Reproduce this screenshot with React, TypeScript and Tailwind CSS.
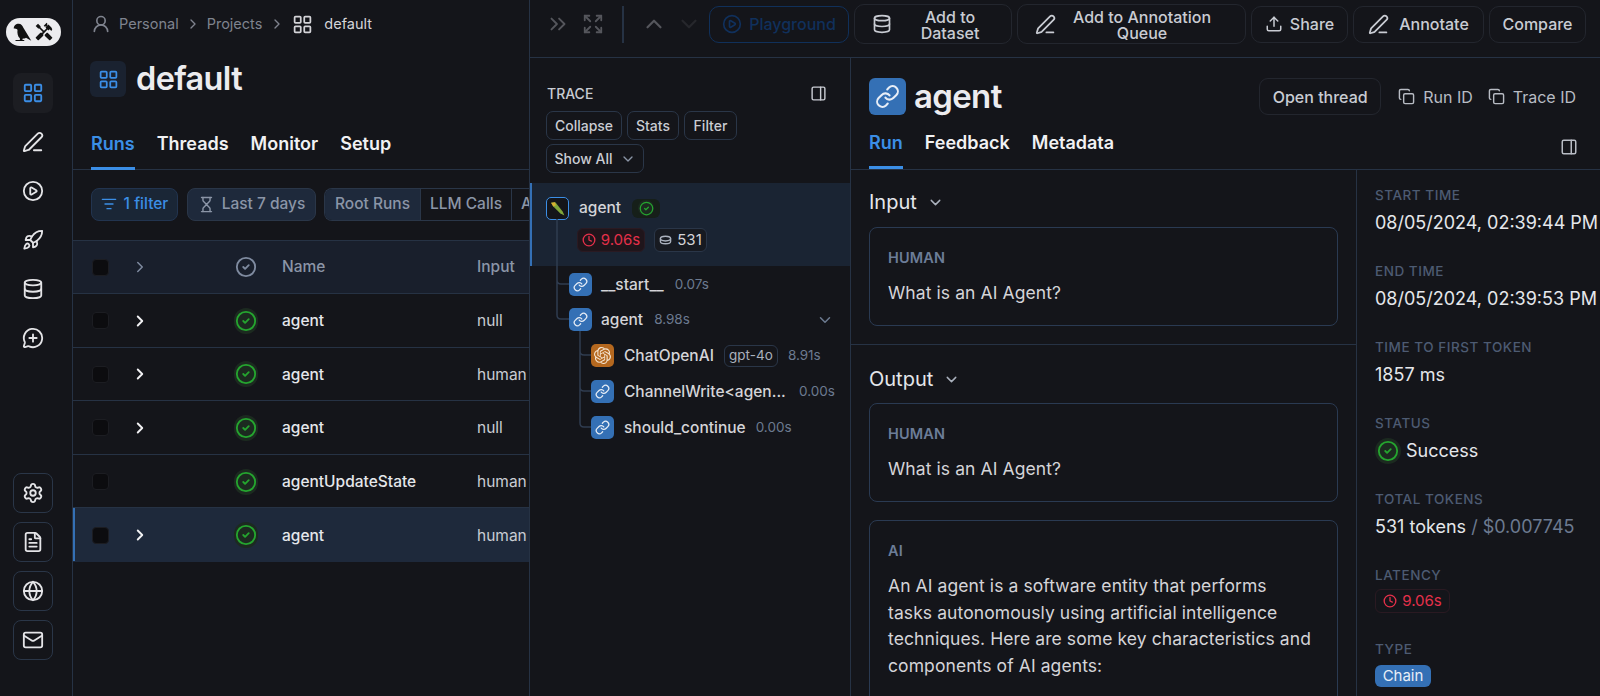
import {
  ChevronDown, ChevronRight, ChevronUp, ChevronsRight, CircleCheck, CirclePlay, Clock, Copy, Database, Expand,
  FileText, Globe, Hourglass, LayoutGrid, Link, ListFilter, Mail, MessageCirclePlus, PanelRight, PenLine,
  Rocket, Settings, Upload, UserRound,
} from 'lucide-react'
import { MdHandyman } from 'react-icons/md'
import { SiOpenai } from 'react-icons/si'

const rows = [
  { name: 'agent', input: 'null', expand: true },
  { name: 'agent', input: 'human', expand: true },
  { name: 'agent', input: 'null', expand: true },
  { name: 'agentUpdateState', input: 'human', expand: false },
  { name: 'agent', input: 'human', expand: true, selected: true },
]

function Parrot({ className }: { className: string }) {
  return (
    <svg viewBox="0 0 24 24" className={className} fill="currentColor">
      <path d="M2 7.500C2 4 4.500 2 7.500 2C10.500 2 12 4 13 6.500L22 21.500L16 18C15 18.800 13.500 19 12 19L12 20.500L14 20.500L14 21.800L4 21.800L4 20.500L9 20.500L9 18.500C6.500 16.500 5.800 12.500 6.300 8.800C5 7.800 3.500 7.500 2 7.500Z" />
    </svg>
  )
}

function StatusIcon({ size = 'md' }: { size?: 'sm' | 'md' }) {
  return (
    <span className={`flex items-center justify-center rounded-full bg-[#1c2a20] ${size === 'md' ? 'h-[26px] w-[26px]' : 'h-[16px] w-[16px]'}`}>
      <CircleCheck className={`text-[#25a52f] ${size === 'md' ? 'h-[22px] w-[22px]' : 'h-[15px] w-[15px]'}`} strokeWidth={2} />
    </span>
  )
}

function NodeIcon({ small = true }: { small?: boolean }) {
  return (
    <span className={`flex shrink-0 items-center justify-center bg-[#3470b5] text-[#e8eef7] ${small ? 'h-[23px] w-[23px] rounded-[5px]' : 'h-[37px] w-[37px] rounded-[6px]'}`}>
      <Link className={small ? 'h-[15px] w-[15px]' : 'h-[25px] w-[25px]'} strokeWidth={2} />
    </span>
  )
}

function Label({ children }: { children: string }) {
  return <div className="text-[13.5px] leading-[20px] font-medium tracking-[0.04em] text-[#4d5b72]">{children}</div>
}

function MetaItem({ label, children }: { label: string; children: React.ReactNode }) {
  return (
    <div className="h-[76px] shrink-0">
      <Label>{label}</Label>
      <div className="mt-[4px] flex h-[27px] items-center text-[18px] whitespace-nowrap text-[#e5e7eb]">{children}</div>
    </div>
  )
}

function Message({ role, children, className }: { role: string; children: React.ReactNode; className: string }) {
  return (
    <div className={`mx-[18px] rounded-[8px] border border-[#2a3a52] px-[18px] ${className}`}>
      <div className="pt-[20px] text-[14.5px] leading-[20px] font-semibold tracking-[0.01em] text-[#6c7d98]">{role}</div>
      <div className="mt-[12px] text-[17.5px] leading-[26.7px] tracking-[0.005em] whitespace-nowrap text-[#d4d4d8]">{children}</div>
    </div>
  )
}

function TraceBtn({ children, className }: { children: React.ReactNode; className: string }) {
  return (
    <button className={`flex h-[29px] items-center justify-center rounded-[7px] border border-[#2a3648] text-[14px] font-medium text-[#c9ccd3] ${className}`}>
      {children}
    </button>
  )
}

function TopBtn({ children, className }: { children: React.ReactNode; className: string }) {
  return (
    <button className={`ml-[5px] flex shrink-0 items-center justify-center rounded-[10px] border border-[#23262e] text-[16px] leading-[16px] font-medium text-[#c9ccd3] ${className}`}>
      {children}
    </button>
  )
}

export default function App() {
  return (
    <div className="flex h-[696px] w-[1600px] overflow-hidden bg-[#14151a] font-[Inter,sans-serif] text-[#e5e7eb]">
      {/* Sidebar */}
      <aside className="flex w-[73px] shrink-0 flex-col border-r border-[#263244] pt-[18px] pb-[36px] pl-[12.5px]">
        <div className="-ml-[7px] flex h-[28px] w-[55px] items-center justify-center gap-[1px] rounded-full bg-[#ececef] text-[#111]">
          <Parrot className="h-[21px] w-[21px]" />
          <MdHandyman className="h-[20px] w-[20px]" />
        </div>
        <div className="mt-[27px] flex flex-col gap-[9px]">
          <div className="flex h-[40px] w-[40px] items-center justify-center rounded-[8px] bg-[#1c1d22] text-[#3b8ee6]">
            <LayoutGrid className="h-[22px] w-[22px]" />
          </div>
          {[PenLine, CirclePlay, Rocket, Database, MessageCirclePlus].map((Icon, i) => (
            <div key={i} className="flex h-[40px] w-[40px] items-center justify-center text-[#e4e4e7]">
              <Icon className="h-[22px] w-[22px]" />
            </div>
          ))}
        </div>
        <div className="mt-auto flex flex-col gap-[9px]">
          {[Settings, FileText, Globe, Mail].map((Icon, i) => (
            <div key={i} className="flex h-[40px] w-[40px] items-center justify-center rounded-[8px] border border-[#2a3648] text-[#e4e4e7]">
              <Icon className="h-[22px] w-[22px]" />
            </div>
          ))}
        </div>
      </aside>

      {/* Runs list */}
      <main className="w-[456px] shrink-0 overflow-hidden">
        <div className="flex h-[48px] items-center pl-[18px] text-[14.5px] text-[#7f838e]">
          <UserRound className="h-[20px] w-[20px]" />
          <span className="ml-[8px]">Personal</span>
          <ChevronRight className="mx-[6px] h-[16px] w-[16px]" />
          <span>Projects</span>
          <ChevronRight className="mx-[7px] h-[16px] w-[16px]" />
          <LayoutGrid className="h-[21px] w-[21px] text-[#d4d4d8]" />
          <span className="ml-[11px] text-[#d4d4d8]">default</span>
        </div>
        <div className="mt-[13px] flex h-[36px] items-center pl-[17px]">
          <span className="flex h-[36px] w-[36px] items-center justify-center rounded-[6px] bg-[#1a2230] text-[#3b8ee6]">
            <LayoutGrid className="h-[21px] w-[21px]" />
          </span>
          <h1 className="ml-[10px] text-[32.5px] leading-[40px] font-semibold tracking-[-0.02em] text-[#ececef]">default</h1>
        </div>
        <div className="flex h-[73px] items-end gap-[22px] border-b border-[#263244] pl-[18px] text-[18px] leading-[24px] font-semibold text-[#f1f1f3]">
          <div className="-mb-[1px] border-b-[3px] border-[#3b8ee6] pb-[11px] text-[#3b8ee6]">Runs</div>
          <div className="pb-[13px]">Threads</div>
          <div className="pb-[13px]">Monitor</div>
          <div className="pb-[13px]">Setup</div>
        </div>
        <div className="flex h-[70px] items-center gap-[9px] pb-[2px] pl-[18px] text-[15.5px] font-medium">
          <button className="flex h-[33px] w-[87px] shrink-0 items-center justify-center gap-[7px] rounded-[8px] border border-[#22344f] bg-[#1a2636] text-[#3b8ee6]">
            <ListFilter className="h-[16px] w-[16px]" />
            1 filter
          </button>
          <button className="flex h-[33px] w-[129px] shrink-0 items-center justify-center gap-[7px] rounded-[8px] border border-[#2a3648] bg-[#1e293b] text-[#8b95a7]">
            <Hourglass className="h-[17px] w-[17px]" />
            Last 7 days
          </button>
          <div className="-ml-[1px] flex h-[33px] shrink-0 overflow-hidden rounded-l-[8px] border border-r-0 border-[#2a3648] whitespace-nowrap text-[#8b95a7]">
            <span className="flex w-[95px] items-center justify-center bg-[#1e293b]">Root Runs</span>
            <span className="flex w-[91px] items-center justify-center border-l border-[#2a3648]">LLM Calls</span>
            <span className="flex w-[20px] items-center border-l border-[#2a3648] pl-[9px]">A</span>
          </div>
        </div>
        <div className="flex h-[54px] items-center border-y border-[#263244] bg-[#191f2c] text-[15.5px] font-medium text-[#8b95a7]">
          <span className="ml-[19px] h-[17px] w-[17px] rounded-[4px] border border-[#1c1d22] bg-[#0c0c0f]" />
          <ChevronRight className="ml-[22px] h-[18px] w-[18px] text-[#7f8ba0]" />
          <span className="ml-[85px] flex w-[24px] justify-center">
            <CircleCheck className="h-[22px] w-[22px] text-[#7f8ba0]" />
          </span>
          <span className="ml-[24px] w-[195px]">Name</span>
          <span>Input</span>
        </div>
        {rows.map((row, i) => (
          <div
            key={i}
            className={`flex h-[53.6px] items-center border-b pt-[1px] text-[15.5px] font-medium text-[#e5e7eb] ${row.selected ? 'border-transparent bg-[#1e293b] shadow-[inset_2px_0_0_#3470b5]' : 'border-[#263244]'}`}
          >
            <span className="ml-[19px] h-[17px] w-[17px] rounded-[4px] border border-[#1c1d22] bg-[#0c0c0f]" />
            <span className="ml-[22px] flex w-[18px] justify-center">
              {row.expand && <ChevronRight className="h-[18px] w-[18px] text-[#f1f1f3]" strokeWidth={2.5} />}
            </span>
            <span className="ml-[85px] flex w-[24px] justify-center">
              <StatusIcon />
            </span>
            <span className="ml-[24px] w-[195px]">{row.name}</span>
            <span className="whitespace-nowrap font-normal text-[#c9ccd3]">{row.input}</span>
          </div>
        ))}
      </main>

      {/* Run panel */}
      <section className="flex min-w-0 flex-1 flex-col border-l border-[#263244]">
        <div className="flex h-[58px] shrink-0 items-center border-b border-[#263244] pb-[9px]">
          <ChevronsRight className="ml-[15px] h-[26px] w-[26px] text-[#55565c]" strokeWidth={1.75} />
          <Expand className="ml-[11px] h-[22px] w-[22px] text-[#55565c]" />
          <span className="ml-[18px] h-[37px] w-[2px] bg-[#263244]" />
          <ChevronUp className="ml-[17px] h-[26px] w-[26px] text-[#55565c]" />
          <ChevronDown className="ml-[9px] h-[26px] w-[26px] text-[#26272c]" />
          <button className="ml-[7px] flex h-[37px] w-[140px] shrink-0 items-center justify-center gap-[7px] rounded-[10px] border border-[#10305a] text-[16px] font-medium text-[#10305c]">
            <CirclePlay className="h-[20px] w-[20px]" />
            Playground
          </button>
          <TopBtn className="h-[40px] w-[158px] justify-start gap-[24px] pl-[17px]">
            <Database className="h-[20px] w-[20px]" />
            <span className="w-[68px] pt-[1px] text-center">Add to Dataset</span>
          </TopBtn>
          <TopBtn className="h-[40px] w-[229px] justify-start gap-[16px] pl-[17px]">
            <PenLine className="h-[21px] w-[21px] shrink-0" />
            <span className="w-[140px] pt-[1px] text-center">Add to Annotation Queue</span>
          </TopBtn>
          <TopBtn className="h-[37px] w-[97px] gap-[7px]">
            <Upload className="h-[18px] w-[18px]" />
            Share
          </TopBtn>
          <TopBtn className="h-[37px] w-[131px] gap-[10px]">
            <PenLine className="h-[21px] w-[21px]" />
            Annotate
          </TopBtn>
          <TopBtn className="h-[37px] w-[97px]">Compare</TopBtn>
        </div>

        <div className="flex min-h-0 flex-1">
          {/* Trace tree */}
          <div className="w-[321px] shrink-0 border-r border-[#263244]">
            <div className="mt-[22px] flex h-[26px] items-center justify-between pr-[23px] pl-[17px] text-[14px] font-medium text-[#c9ccd3]">
              TRACE
              <PanelRight className="h-[17px] w-[17px]" />
            </div>
            <div className="mt-[5px] flex gap-[5px] pl-[16px]">
              <TraceBtn className="w-[76px]">Collapse</TraceBtn>
              <TraceBtn className="w-[52px]">Stats</TraceBtn>
              <TraceBtn className="w-[53px]">Filter</TraceBtn>
            </div>
            <TraceBtn className="mt-[4px] ml-[16px] w-[98px] gap-[7px]">
              Show All
              <ChevronDown className="h-[16px] w-[16px] text-[#8b95a7]" />
            </TraceBtn>
            <div className="relative mt-[10px]">
              <div className="relative h-[83px] border-l-2 border-[#3470b5] bg-[#1a2433] pt-[14px] pl-[14px]">
                <div className="flex h-[22px] items-center">
                  <span className="flex h-[23px] w-[23px] items-center justify-center rounded-[5px] border-[1.5px] border-[#3b8ee6] bg-[#14151a]">
                    <svg viewBox="0 0 16 16" className="h-[17px] w-[17px]">
                      <path d="M2 2.500L6 2L13 11L14.500 14.500L10.500 12.500L4 6Z" fill="#7fa63a" />
                      <path d="M2 2.500L5.500 2L6.500 5L4 6Z" fill="#d8b030" />
                    </svg>
                  </span>
                  <span className="ml-[10px] text-[15.5px] font-medium text-[#d4d4d8]">agent</span>
                  <span className="ml-[11px] flex h-[19px] w-[28px] items-center justify-center rounded-[6px] bg-[#161f19]">
                    <StatusIcon size="sm" />
                  </span>
                </div>
                <div className="mt-[9px] ml-[31px] flex gap-[9px] text-[15px]">
                  <span className="flex h-[24px] w-[68px] items-center justify-center gap-[5px] rounded-[6px] border border-[#2a1a22] bg-[#1f151b] text-[#e5304a]">
                    <Clock className="h-[14px] w-[14px]" strokeWidth={2.25} />
                    9.06s
                  </span>
                  <span className="flex h-[24px] w-[53px] items-center justify-center gap-[5px] rounded-[6px] border border-[#2a3648] bg-[#171a21] text-[#d4d4d8]">
                    <svg viewBox="0 0 14 10" className="h-[10px] w-[13px] text-[#aab1bd]" fill="none" stroke="currentColor" strokeWidth="1.5">
                      <ellipse cx="7" cy="3.500" rx="5.500" ry="2.500" />
                      <path d="M1.500 3.500V6.500C1.500 7.800 4 9 7 9S12.500 7.800 12.500 6.500V3.500" />
                    </svg>
                    531
                  </span>
                </div>
              </div>
              <svg className="absolute top-0 left-0 h-[270px] w-[100px]" fill="none" stroke="#2f3c50" strokeWidth="1.5">
                <path d="M27 36V97Q27 101 31 101H40M27 97V132Q27 136 31 136H40M50 148V168Q50 172 54 172H62M50 168V204Q50 208 54 208H62M50 204V240Q50 244 54 244H62" />
              </svg>
              <div className="relative mt-[7px] flex h-[23px] items-center pl-[39px]">
                <NodeIcon />
                <span className="ml-[9px] text-[15.5px] font-medium text-[#d4d4d8]">__start__</span>
                <span className="ml-[11px] text-[13.5px] text-[#6c7a90]">0.07s</span>
              </div>
              <div className="relative mt-[12px] flex h-[23px] items-center pl-[39px]">
                <NodeIcon />
                <span className="ml-[9px] text-[15.5px] font-medium text-[#d4d4d8]">agent</span>
                <span className="ml-[11px] text-[13.5px] text-[#6c7a90]">8.98s</span>
                <ChevronDown className="mr-[16px] ml-auto h-[18px] w-[18px] text-[#6c7a90]" />
              </div>
              <div className="relative mt-[13px] flex h-[23px] items-center pl-[61px]">
                <span className="flex h-[23px] w-[23px] shrink-0 items-center justify-center rounded-[5px] bg-[#b5681f] text-[#f5e6d3]">
                  <SiOpenai className="h-[17px] w-[17px]" />
                </span>
                <span className="ml-[10px] text-[15.5px] font-medium text-[#d4d4d8]">ChatOpenAI</span>
                <span className="ml-[10px] flex h-[22px] w-[54px] items-center justify-center rounded-[6px] border border-[#2a3648] text-[13.5px] text-[#aab1bd]">gpt-4o</span>
                <span className="ml-[10px] text-[13.5px] text-[#6c7a90]">8.91s</span>
              </div>
              <div className="relative mt-[13px] flex h-[23px] items-center pl-[61px]">
                <NodeIcon />
                <span className="ml-[10px] w-[163px] whitespace-nowrap text-[15.5px] font-medium text-[#d4d4d8]">ChannelWrite&lt;agen...</span>
                <span className="ml-[12px] text-[13.5px] text-[#6c7a90]">0.00s</span>
              </div>
              <div className="relative mt-[13px] flex h-[23px] items-center pl-[61px]">
                <NodeIcon />
                <span className="ml-[10px] text-[15.5px] font-medium text-[#d4d4d8]">should_continue</span>
                <span className="ml-[10px] text-[13.5px] text-[#6c7a90]">0.00s</span>
              </div>
            </div>
          </div>

          {/* Run details */}
          <div className="flex min-w-0 flex-1 flex-col">
            <div className="h-[112px] shrink-0 border-b border-[#263244] pt-[20px]">
              <div className="flex h-[37px] items-center pr-[24px] pl-[18px]">
                <NodeIcon small={false} />
                <h2 className="ml-[8px] pb-[2px] text-[33px] leading-[40px] font-semibold tracking-[-0.02em] text-[#ececef]">agent</h2>
                <button className="ml-auto flex h-[37px] w-[122px] items-center justify-center rounded-[9px] border border-[#23262e] text-[16px] font-medium text-[#c9ccd3]">Open thread</button>
                <span className="ml-[17px] flex items-center gap-[8px] text-[16px] text-[#b8bcc4]">
                  <Copy className="h-[17px] w-[17px]" />
                  Run ID
                </span>
                <span className="ml-[15px] flex items-center gap-[8px] text-[16px] text-[#b8bcc4]">
                  <Copy className="h-[17px] w-[17px]" />
                  Trace ID
                </span>
              </div>
              <div className="mt-[16px] flex h-[38px] gap-[22px] pl-[18px] text-[18px] leading-[24px] font-semibold text-[#f1f1f3]">
                <div className="border-b-[3px] border-[#3b8ee6] pb-[11px] text-[#3b8ee6]">Run</div>
                <div>Feedback</div>
                <div>Metadata</div>
                <PanelRight className="mt-[7px] mr-[22px] ml-auto h-[18px] w-[18px] text-[#b8bcc4]" />
              </div>
            </div>
            <div className="flex min-h-0 flex-1">
              <div className="w-[506px] shrink-0 overflow-hidden border-r border-[#263244]">
                <div className="h-[175px] border-b border-[#263244] pt-[18px]">
                  <div className="flex h-[28px] items-center gap-[10px] px-[18px] text-[20px] text-[#e5e7eb]">
                    Input
                    <ChevronDown className="h-[17px] w-[17px] text-[#aab1bd]" />
                  </div>
                  <Message role="HUMAN" className="mt-[11px] h-[99px]">What is an AI Agent?</Message>
                </div>
                <div className="mt-[20px] flex h-[28px] items-center gap-[10px] px-[18px] text-[20px] text-[#e5e7eb]">
                  Output
                  <ChevronDown className="h-[17px] w-[17px] text-[#aab1bd]" />
                </div>
                <Message role="HUMAN" className="mt-[10px] h-[99px]">What is an AI Agent?</Message>
                <Message role="AI" className="mt-[18px] h-[240px]">
                  An AI agent is a software entity that performs<br />
                  tasks autonomously using artificial intelligence<br />
                  techniques. Here are some key characteristics and<br />
                  components of AI agents:
                </Message>
              </div>
              <div className="flex-1 pt-[15px] pl-[18px]">
                <MetaItem label="START TIME">08/05/2024, 02:39:44 PM</MetaItem>
                <MetaItem label="END TIME">08/05/2024, 02:39:53 PM</MetaItem>
                <MetaItem label="TIME TO FIRST TOKEN">1857 ms</MetaItem>
                <MetaItem label="STATUS">
                  <span className="flex items-center gap-[5px]">
                    <StatusIcon />
                    Success
                  </span>
                </MetaItem>
                <MetaItem label="TOTAL TOKENS">
                  <span>531 tokens <span className="text-[#6c7a90]">/ $0.007745</span></span>
                </MetaItem>
                <div className="h-[74px] shrink-0">
                  <Label>LATENCY</Label>
                  <span className="mt-[4px] flex h-[24px] w-[75px] items-center justify-center gap-[5px] rounded-[6px] border border-[#2a1a22] text-[15px] text-[#e5304a]">
                    <Clock className="h-[14px] w-[14px]" strokeWidth={2.25} />
                    9.06s
                  </span>
                </div>
                <div>
                  <Label>TYPE</Label>
                  <span className="mt-[6px] flex h-[22px] w-[56px] items-center justify-center rounded-[6px] bg-[#3470b5] text-[15px] text-[#e8eef7]">Chain</span>
                </div>
              </div>
            </div>
          </div>
        </div>
      </section>
    </div>
  )
}
